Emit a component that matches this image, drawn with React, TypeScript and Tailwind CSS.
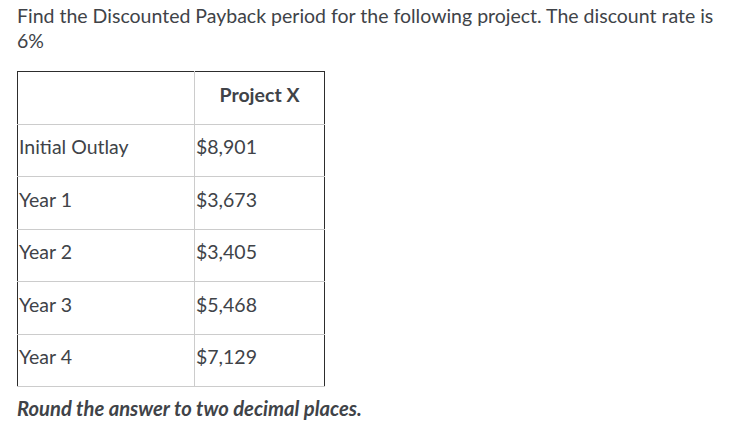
const rows = [
  { label: "Initial Outlay", value: "$8,901" },
  { label: "Year 1", value: "$3,673" },
  { label: "Year 2", value: "$3,405" },
  { label: "Year 3", value: "$5,468" },
  { label: "Year 4", value: "$7,129" },
];

export default function App() {
  return (
    <div className="min-h-screen bg-white pl-[17px] pr-[8px] pt-[3px] font-['Lato','Noto_Sans',sans-serif] text-[19.5px] leading-[25px] text-[#404348]">
      <p>
        Find the Discounted Payback period for the following project. The discount rate is
        6%
      </p>

      <table className="mt-[18px] border-collapse border border-[#2d2d2d]">
        <tbody>
          <tr className="h-[52.5px]">
            <td className="w-[177px] border border-[#cccccc] border-l-[#2d2d2d] border-t-[#2d2d2d] p-0"></td>
            <td className="w-[130px] border border-[#cccccc] border-r-[#2d2d2d] border-t-[#2d2d2d] p-0 pb-[7px] text-center font-bold">
              Project X
            </td>
          </tr>
          {rows.map((r) => (
            <tr key={r.label} className="h-[52.5px]">
              <td className="border border-[#cccccc] border-l-[#2d2d2d] p-0 pb-[7px] pl-px">{r.label}</td>
              <td className="border border-[#cccccc] border-r-[#2d2d2d] p-0 pb-[7px] pl-px">{r.value}</td>
            </tr>
          ))}
        </tbody>
      </table>

      <p className="mt-[9px] text-[20.2px] font-bold italic">Round the answer to two decimal places.</p>
    </div>
  );
}
